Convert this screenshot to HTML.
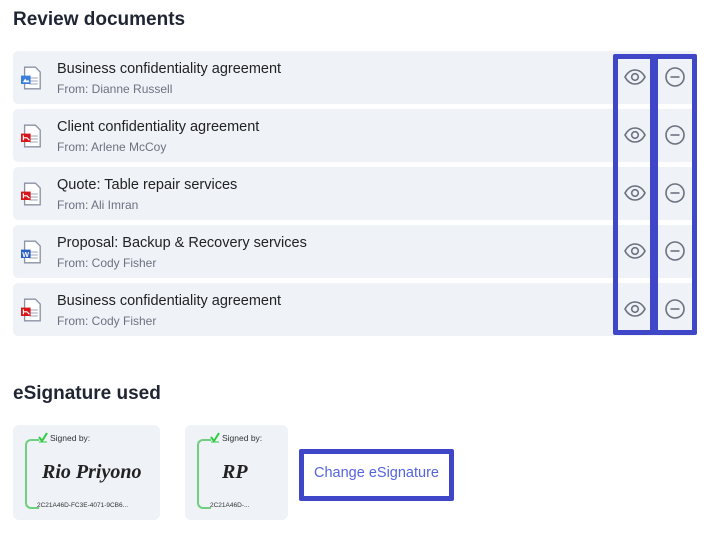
<!DOCTYPE html><html><head><style>
*{margin:0;padding:0;box-sizing:border-box}
body{width:706px;height:536px;background:#fff;font-family:"Liberation Sans",sans-serif;position:relative;overflow:hidden;color:#1f2533}
h2{position:absolute;left:13px;font-size:19px;font-weight:700;color:#1f2533}
.row{position:absolute;left:13px;width:684px;height:53px;background:#eff2f7;border-radius:5px}
.t{position:absolute;left:44px;top:10px;font-size:14.5px;color:#222}
.s{position:absolute;left:44px;top:31px;font-size:12px;color:#6b7280}
.ic{position:absolute;left:8px;top:15px}
.eye{position:absolute;left:610px;top:14px}
.min{position:absolute;left:650px;top:14px}
.box{position:absolute;border:5px solid #3f46c8;border-radius:2px}
.card{position:absolute;top:425px;height:95px;background:#eff2f7;border-radius:6px}
.br{position:absolute;left:12px;top:14px;width:14px;height:70px;border:2px solid #6fcf7f;border-right:none;border-radius:6px 0 0 6px}
.sb{position:absolute;top:8px;font-size:8.5px;color:#333}
.sig{position:absolute;font-family:"Liberation Serif",serif;font-style:italic;font-weight:700;font-size:20px;color:#222}
.hash{position:absolute;top:77px;font-size:6.5px;color:#333}
</style></head><body>
<h2 style="top:9px">Review documents</h2>
<h2 style="top:383px">eSignature used</h2>

<svg width="0" height="0" style="position:absolute"><defs>
<g id="doc"><path d="M3 1h9l4 4v14H3z" fill="#fff" stroke="#8a93a3" stroke-width="1.1"/><path d="M7 10h7M7 12.5h7M7 15h7" stroke="#b0b7c3"/></g>
<g id="eye"><path d="M2 12C5 6.5 9 5 12 5s7 1.5 10 7c-3 5.5-7 7-10 7S5 17.5 2 12z" fill="none" stroke="#6b7280" stroke-width="1.6"/><circle cx="12" cy="12" r="3.3" fill="none" stroke="#6b7280" stroke-width="1.6"/></g>
<g id="min"><circle cx="12" cy="12" r="9" fill="none" stroke="#6b7280" stroke-width="1.6"/><path d="M7.5 12h9" stroke="#6b7280" stroke-width="1.6"/></g>
</defs></svg>

<div class="row" style="top:51px"><svg class="ic" width="24" height="24" viewBox="0 0 20 20"><use href="#doc"/><rect x="0" y="8" width="8" height="7" fill="#3b7ee0"/><path d="M1.5 13.5l2-3 1.5 2 1-1 1 2z" fill="#fff"/></svg><div class="t">Business confidentiality agreement</div><div class="s">From: Dianne Russell</div><svg class="eye" width="24" height="24"><use href="#eye"/></svg><svg class="min" width="24" height="24"><use href="#min"/></svg></div>
<div class="row" style="top:109px"><svg class="ic" width="24" height="24" viewBox="0 0 20 20"><use href="#doc"/><rect x="0" y="8" width="8" height="7" fill="#d7161b"/><path d="M2 9.5v4M2 11.5h3l2 2" stroke="#fff" fill="none"/></svg><div class="t">Client confidentiality agreement</div><div class="s">From: Arlene McCoy</div><svg class="eye" width="24" height="24"><use href="#eye"/></svg><svg class="min" width="24" height="24"><use href="#min"/></svg></div>
<div class="row" style="top:167px"><svg class="ic" width="24" height="24" viewBox="0 0 20 20"><use href="#doc"/><rect x="0" y="8" width="8" height="7" fill="#d7161b"/><path d="M2 9.5v4M2 11.5h3l2 2" stroke="#fff" fill="none"/></svg><div class="t">Quote: Table repair services</div><div class="s">From: Ali Imran</div><svg class="eye" width="24" height="24"><use href="#eye"/></svg><svg class="min" width="24" height="24"><use href="#min"/></svg></div>
<div class="row" style="top:225px"><svg class="ic" width="24" height="24" viewBox="0 0 20 20"><use href="#doc"/><rect x="0" y="8" width="8" height="7" fill="#2b5fc4"/><text x="1" y="14" font-size="6" font-weight="700" fill="#fff" font-family="Liberation Sans">W</text></svg><div class="t">Proposal: Backup &amp; Recovery services</div><div class="s">From: Cody Fisher</div><svg class="eye" width="24" height="24"><use href="#eye"/></svg><svg class="min" width="24" height="24"><use href="#min"/></svg></div>
<div class="row" style="top:283px"><svg class="ic" width="24" height="24" viewBox="0 0 20 20"><use href="#doc"/><rect x="0" y="8" width="8" height="7" fill="#d7161b"/><path d="M2 9.5v4M2 11.5h3l2 2" stroke="#fff" fill="none"/></svg><div class="t">Business confidentiality agreement</div><div class="s">From: Cody Fisher</div><svg class="eye" width="24" height="24"><use href="#eye"/></svg><svg class="min" width="24" height="24"><use href="#min"/></svg></div>

<div class="box" style="left:613px;top:54px;width:42px;height:281px"></div>
<div class="box" style="left:653px;top:54px;width:44px;height:281px"></div>

<div class="card" style="left:13px;width:147px"><div class="br" style="left:12px;top:14px"></div><svg style="position:absolute;left:25px;top:7px" width="10" height="11"><path d="M1 5l3 4 5-8" stroke="#2ecc40" stroke-width="2" fill="none"/><path d="M1 10h8" stroke="#2ecc40"/></svg><div class="sb" style="left:37px">Signed by:</div><div class="sig" style="left:29px;top:36px">Rio Priyono</div><div class="hash" style="left:24px">2C21A46D-FC3E-4071-9CB6...</div></div>
<div class="card" style="left:185px;width:103px"><div class="br"></div><svg style="position:absolute;left:25px;top:7px" width="10" height="11"><path d="M1 5l3 4 5-8" stroke="#2ecc40" stroke-width="2" fill="none"/><path d="M1 10h8" stroke="#2ecc40"/></svg><div class="sb" style="left:37px">Signed by:</div><div class="sig" style="left:37px;top:36px">RP</div><div class="hash" style="left:25px">2C21A46D-...</div></div>

<div class="box" style="left:299px;top:449px;width:155px;height:52px;display:flex;align-items:center;justify-content:center;font-size:14.5px;color:#5563e0;padding-bottom:4px">Change eSignature</div>
</body></html>
